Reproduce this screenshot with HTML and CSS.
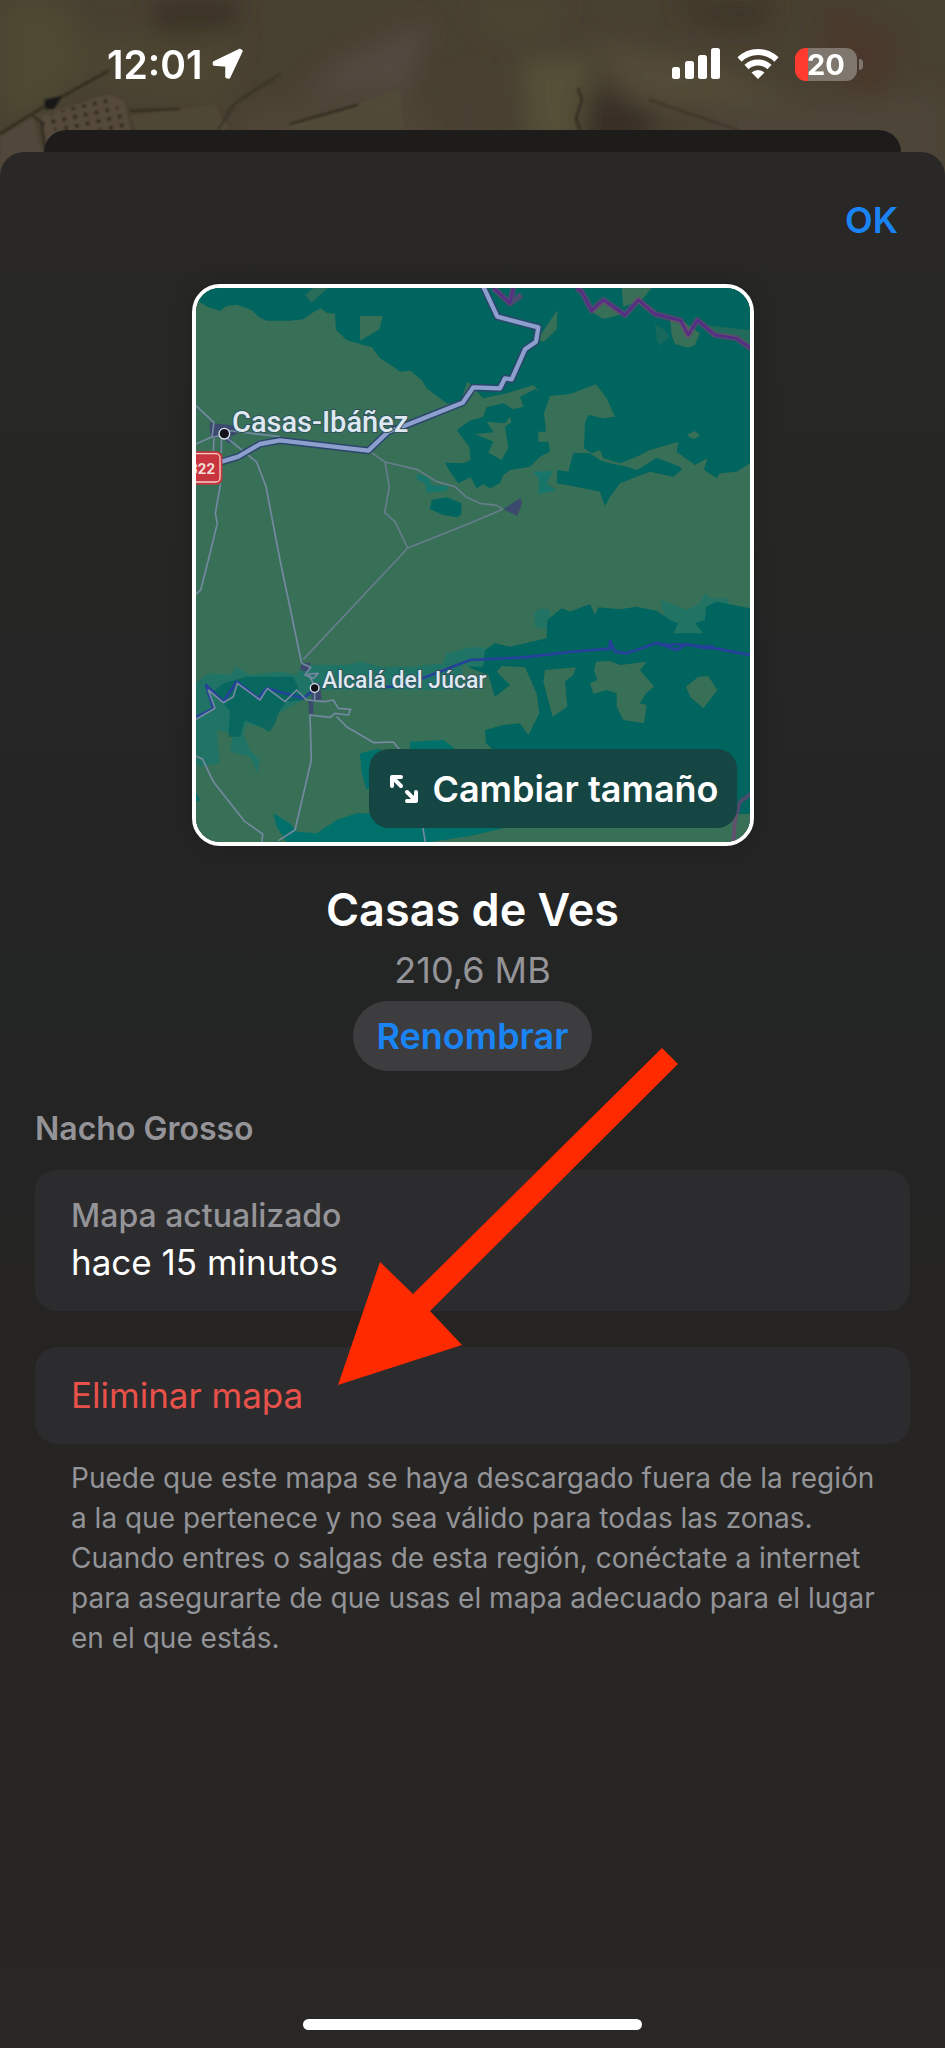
FILE: index.html
```html
<!DOCTYPE html>
<html lang="es">
<head>
<meta charset="UTF-8" />
<meta name="viewport" content="width=device-width, initial-scale=1" />
<title>Casas de Ves - Mapas sin conexión</title>
<link rel="stylesheet" href="styles.css">
</head>
<body>
<svg class="wallpaper" viewBox="0 0 945 180" preserveAspectRatio="none" aria-hidden="true">
  <defs>
    <filter id="soft" x="-20%" y="-20%" width="140%" height="140%"><feGaussianBlur stdDeviation="12" /></filter>
    <filter id="slight" x="-20%" y="-20%" width="140%" height="140%"><feGaussianBlur stdDeviation="1" /></filter>
    <pattern id="holes" width="11" height="9" patternUnits="userSpaceOnUse" patternTransform="rotate(-12)">
      <circle cx="5" cy="4" r="2" fill="#2a2119" />
    </pattern>
  </defs>
  <rect width="945" height="180" fill="#484031" />
  <g filter="url(#soft)">
    <path d="M0 0H60L100 60 40 110 0 120Z" fill="#4e4833" />
    <path d="M150 0H240L235 40 160 38Z" fill="#3b3325" />
    <path d="M60 40 240 30 225 110 110 90Z" fill="#4c4531" />
    <path d="M340 60 430 20 410 90 300 90Z" fill="#534a3f" />
    <path d="M250 110 400 90 470 180H210Z" fill="#4f4538" />
    <path d="M480 0H570L540 40 480 30Z" fill="#4c4530" />
    <path d="M520 60 590 55 580 150 530 150Z" fill="#545038" />
    <path d="M590 40 700 60 800 100 640 110Z" fill="#534b38" />
    <path d="M590 90 660 110 640 150 580 150Z" fill="#392e27" />
    <path d="M670 0H780L760 30 700 25Z" fill="#3e3427" />
    <path d="M820 0 900 40 880 110 830 70Z" fill="#49392a" />
    <path d="M700 110 945 90V180H740Z" fill="#4e4538" />
    <path d="M440 90 480 70 500 150H450Z" fill="#484033" />
  </g>
  <g filter="url(#slight)">
    <path d="M0 137 34 116 48 180H0Z" fill="#51463a" />
    <path d="M38 116 108 94 124 100 132 134 46 150Z" fill="#54493a" />
    <path d="M40 117 112 96 129 130H44Z" fill="url(#holes)" />
    <path d="M130 116 215 104 230 130H136Z" fill="#504634" />
    <path d="M290 122 358 104 400 88 404 130H292Z" fill="#524b36" opacity=".7" />
    <path d="M0 134 40 109 108 71" stroke="#28251c" stroke-width="2" fill="none" />
    <path d="M44 100 62 96 54 109 46 109Z" fill="#141917" />
    <path d="M32 116 41 121 46 150" stroke="#29251f" stroke-width="2" fill="none" />
    <path d="M130 111 180 109" stroke="#302a1e" stroke-width="2" />
    <path d="M218 130 234 104 280 74" stroke="#363025" stroke-width="2" fill="none" />
    <path d="M290 124 358 105" stroke="#2b251b" stroke-width="2" />
    <path d="M578 88 582 100 576 118 580 130" stroke="#2d281f" stroke-width="2" fill="none" />
    <path d="M650 100 738 130" stroke="#2f271f" stroke-width="1" />
  </g>
</svg>

<header class="status-bar">
  <div class="status-time">
    <span>12:01</span>
    <svg width="32" height="32" viewBox="0 0 32 32" aria-hidden="true">
      <path d="M28 2 2 14.500V16.500L14.500 17.500V29L17 29.500 29.500 3Z" fill="#fff" stroke="#fff" stroke-width="2.500" stroke-linejoin="round" />
    </svg>
  </div>
  <div class="status-icons">
    <svg width="49" height="32" viewBox="0 0 49 32" fill="#fff" aria-hidden="true">
      <rect x="0" y="19" width="8" height="12" rx="2.500" />
      <rect x="13" y="13" width="9" height="18" rx="2.500" />
      <rect x="26" y="7" width="9" height="24" rx="2.500" />
      <rect x="39" y="0" width="9" height="31" rx="2.500" />
    </svg>
    <svg width="42" height="32" viewBox="0 0 42 32" aria-hidden="true">
      <path d="M2.500 11.500A26.500 26.500 0 0 1 39.500 11.500" fill="none" stroke="#fff" stroke-width="6" />
      <path d="M9.500 19A17 17 0 0 1 32.500 19" fill="none" stroke="#fff" stroke-width="6" />
      <path d="M21 31 14.500 24.500A9.500 9.500 0 0 1 27.500 24.500Z" fill="#fff" />
    </svg>
    <div class="battery"><span class="battery-body">20</span><span class="battery-tip"></span></div>
  </div>
</header>

<div class="sheet-behind"></div>

<main class="sheet">
  <div class="toolbar">
    <button type="button" class="link-button">OK</button>
  </div>

  <section class="map-card" aria-label="Zona del mapa">
    <svg class="map" viewBox="0 0 554 554" role="img" aria-label="Mapa de Casas-Ibáñez y Alcalá del Júcar">
      <rect width="554" height="554" fill="#387057" />
      <g transform="translate(-16 -18) scale(.33333)">
        <!-- north forest -->
        <path fill="#00645f" d="M48 54V90L85 112 120 122 140 108 170 104 215 120 235 140 260 152 330 152 370 148 395 130 422 115 440 128 465 132 468 180 500 210 540 222 575 232 600 265 640 290 660 305 690 302 725 330 740 355 800 400 840 400 862 335 880 350 895 370 910 385 980 370 1060 345 1078 365 1065 358 1020 380 1030 410 1000 418 970 400 920 412 910 440 870 452 830 480 868 530 872 570 850 580 795 578 810 605 835 640 872 622 890 655 910 642 930 655 960 640 970 615 990 600 1050 590 1080 560 1110 545 1105 515 1075 515 1075 485 1098 485 1092 430 1110 378 1170 372 1248 343 1280 385 1305 440 1270 445 1225 435 1215 460 1212 535 1235 550 1260 540 1270 565 1320 580 1370 560 1410 540 1495 515 1490 545 1545 585 1582 565 1572 600 1610 625 1620 610 1670 605 1712 578V54Z" />
        <path fill="#00645f" d="M1180 548 1230 550 1260 570 1290 580 1340 590 1372 600 1430 563 1500 590 1505 600 1480 620 1410 605 1370 620 1320 640 1290 680 1275 708 1260 665 1210 655 1160 645 1130 640 1132 600 1165 605Z" />
        <path fill="#00645f" d="M755 690 800 682 845 700 843 735 830 742 790 735 750 718Z" />
        <path fill="#18756a" d="M710 612 745 622 755 645 805 648 800 664 740 668 735 640 712 630Z" />
        <path fill="#18756a" d="M1060 605 1120 603 1100 640 1130 662 1075 672 1078 630Z" />
        <g fill="#387057">
          <path d="M540 138 608 138 598 178 540 212Z" />
          <path d="M375 75 400 54H444L395 98Z" opacity=".7" />
          <path d="M1085 190 1132 120 1130 178 1092 215 1073 210Z" />
          <path d="M885 492 940 487 920 455 975 460 990 440 994 456 975 470 985 535 965 570 925 548 940 515Z" />
          <path d="M1235 125 1270 90 1330 128 1310 137 1270 147Z" />
          <path d="M1325 54H1415L1385 90 1430 125 1400 120 1370 95 1330 110Z" />
          <path d="M1470 150 1500 148 1560 190 1545 225 1525 233 1485 222 1475 195Z" />
          <path d="M1520 495 1545 483 1560 497 1540 508Z" />
          <path d="M1425 160 1450 178 1468 200 1440 228 1430 210Z" opacity=".4" />
          <path d="M1570 165 1630 172 1712 180V225L1640 195 1600 200Z" opacity=".6" />
        </g>

        <!-- valley forest -->
        <path fill="#18756a" d="M48 1240 85 1210 150 1215 170 1190 210 1215 300 1205 350 1215 365 1185 500 1185 545 1175 600 1190 700 1190 790 1180 800 1150 870 1132 915 1132V1260H858L848 1300 838 1260H430L350 1300 330 1310 230 1370 200 1360 190 1390 210 1440 240 1470 232 1510 210 1460 150 1445 160 1390 110 1380 120 1480 60 1490 48 1480Z" opacity=".75" />
        <path fill="#00645f" opacity=".75" d="M95 1270 130 1240 200 1220 340 1220 370 1290 320 1295 300 1320 285 1360 270 1385 195 1350 180 1400 145 1400 150 1320Z" />
        <path fill="#18756a" d="M1062 1030 1080 1015 1110 1020V1080L1065 1070ZM1440 990 1460 995 1520 1020 1560 1000 1575 970 1590 985 1645 985 1640 1080 1560 1110 1470 1100Z" opacity=".7" />
        <path fill="#00645f" d="M910 1190 915 1140 945 1120 990 1130 1100 1105 1102 1050 1145 1015 1170 1025 1230 1002 1245 1035 1255 1012 1320 1018 1370 1010 1430 1022 1470 1050 1495 1060 1480 1090 1570 1090 1545 1060 1575 1050 1578 1010 1610 995 1712 1015V1632H1600L870 1440V1190Z" />
        <path fill="#387057" d="M850 1170 860 1190 925 1215 945 1280 990 1245 950 1205 965 1188 1035 1192 1070 1270 1078 1330 1045 1395 1020 1360 970 1365 915 1380 918 1420 940 1440H850L840 1290Z" />
        <path fill="#387057" d="M1095 1200 1188 1192 1180 1215 1155 1235 1162 1310 1118 1340 1090 1235ZM1248 1175 1290 1172 1320 1185 1400 1175 1380 1200 1422 1250 1398 1270 1380 1300 1400 1305 1392 1360 1330 1350 1310 1310V1270L1280 1260 1240 1272 1230 1240 1252 1230 1242 1200ZM1518 1250 1555 1220 1585 1218 1612 1260 1570 1315 1530 1280Z" />
        <path fill="#00706a" d="M690 1415 790 1410 830 1440H690ZM540 1450 600 1435 620 1520 560 1560 545 1510ZM280 1630 330 1660 350 1685 410 1690 470 1650 530 1630 970 1632 970 1675 870 1698 750 1716H320L290 1670ZM48 1570 60 1590 48 1595Z" />

        <!-- rivers -->
        <g fill="none" stroke-linejoin="round">
          <path d="M940 54 990 100 1000 54M990 100 1025 75M1190 54 1205 65 1235 122 1270 90 1335 135 1375 90 1425 132 1502 152 1525 195 1552 150 1605 195 1670 205 1712 235" stroke="#7c3a78" stroke-width="18" opacity=".6" />
          <path d="M940 54 990 100 1000 54M1190 54 1205 65 1235 122 1270 90 1335 135 1375 90 1425 132 1502 152 1525 195 1552 150 1605 195 1670 205 1712 235" stroke="#572c87" stroke-width="7" />
          <path d="M48 1342 100 1315 78 1245 130 1295 170 1235 235 1285 260 1255 370 1285 400 1260M600 1252 660 1248 740 1220 870 1170 1030 1162 1180 1145 1290 1136 1290 1113 1305 1145 1340 1150 1385 1135 1430 1118 1490 1140 1520 1122 1560 1132 1610 1136 1640 1142 1712 1155" stroke="#26419a" stroke-width="8" />
          <path d="M1430 1120 1470 1125 1500 1122 1570 1130 1600 1128" stroke="#26419a" stroke-width="8" />
          <path d="M1712 1572 1680 1595 1665 1650 1660 1716" stroke="#7c3a78" stroke-width="12" opacity=".6" />
        </g>

        <!-- towns -->
        <path fill="#3b4a6d" d="M88 458 150 465 200 480 150 500 160 520 145 520 125 500 92 505ZM970 718 1022 683 1026 700 1012 738ZM365 1180 392 1178 385 1205 360 1200ZM385 1290H400V1332H387ZM392 1240 420 1240 425 1290H395Z" />

        <!-- local roads -->
        <g fill="none" stroke="#667d8c" stroke-width="5" stroke-linejoin="round">
          <path d="M48 407 102 458 96 500M48 522 90 503 130 495 230 576 258 650 300 870 365 1180M130 480 300 500M102 505 100 545M124 505V550M122 640 106 730 112 760 85 870 62 960 48 972" stroke="#7489a0" />
          <path d="M570 545 615 576 710 598 770 635 825 650 860 682 900 700 950 706 968 718 870 760 683 834 650 870 370 1168M615 576 628 650 614 728 645 755 683 834" />
          <path d="M48 1348 105 1315 85 1260 130 1298 160 1280 172 1240 240 1290 262 1255 315 1295 350 1260 380 1290 435 1295 460 1290 475 1315 512 1318 505 1335 465 1330 450 1342 390 1335 394 1470 345 1680 295 1712M470 1340 502 1372 582 1418 640 1416 660 1440M365 1180 392 1192 375 1215 400 1225 415 1210 385 1212 400 1240M404 1265V1290M48 1458 68 1468 100 1535 195 1655 248 1692 246 1716M728 1670 736 1716" stroke="#7489a0" />
        </g>

        <!-- N-322 -->
        <g fill="none" stroke-linejoin="round">
          <path d="M125 575 175 560 240 522 300 511 565 542 625 485 680 465 848 398 880 352 960 355 975 325 995 328 1035 238 1068 215 1075 172 952 140 910 50" stroke="#2b456b" stroke-width="22" />
          <path d="M125 575 175 560 240 522 300 511 565 542 625 485 680 465 848 398 880 352 960 355 975 325 995 328 1035 238 1068 215 1075 172 952 140 910 50" stroke="#8d9fcc" stroke-width="13" />
        </g>
        <rect x="0" y="544" width="127" height="100" rx="18" fill="#c8353f" />
        <rect x="0" y="551" width="120" height="85" rx="13" fill="none" stroke="#f0cfc8" stroke-width="4" />
        <circle cx="133" cy="491" r="16" fill="#15131c" stroke="#dbe6ee" stroke-width="4" />
        <circle cx="404" cy="1254" r="13" fill="#101018" stroke="#dbe6ee" stroke-width="4" />
      </g>
      <text class="road-number" x="19" y="186" text-anchor="end">322</text>
      <text class="town" x="36" y="144">Casas-Ibáñez</text>
      <text class="town town-small" x="126" y="400">Alcalá del Júcar</text>
    </svg>
    <button type="button" class="resize-button">
      <svg width="28" height="28" viewBox="0 0 28 28" fill="none" stroke="#fff" stroke-width="4" stroke-linecap="round" stroke-linejoin="round" aria-hidden="true">
        <path d="M2 11V2H11M3 3 11 11M26 17V26H17M25 25 17 17" />
      </svg>
      Cambiar tamaño
    </button>
  </section>

  <h1 class="map-name">Casas de Ves</h1>
  <p class="map-size">210,6 MB</p>
  <button type="button" class="rename-button">Renombrar</button>

  <section class="details">
    <h2 class="owner">Nacho Grosso</h2>
    <div class="card">
      <p class="card-label">Mapa actualizado</p>
      <p class="card-value">hace 15 minutos</p>
    </div>
    <button type="button" class="card delete-button">Eliminar mapa</button>
    <p class="footnote">Puede que este mapa se haya descargado fuera de la región a la que pertenece y no sea válido para todas las zonas. Cuando entres o salgas de esta región, conéctate a internet para asegurarte de que usas el mapa adecuado para el lugar en el que estás.</p>

    <svg class="pointer-arrow" width="340" height="337" viewBox="0 0 340 337" aria-hidden="true">
      <path d="M324 0 340 16 92 263 124 297 0 337 42 214 75 246Z" fill="#ff2a00" />
    </svg>
  </section>

  <div class="home-indicator"></div>
</main>
</body>
</html>
```
FILE: styles.css
```css
:root {
  --blue: #1a84f5;
  --red: #e8514a;
  --card: #2c2c2e;
  --grey: #949498;
  --font-family: Inter, "Liberation Sans", sans-serif;
}

* {
  box-sizing: border-box;
}

body {
  margin: 0;
  position: relative;
  min-height: 100vh;
  display: flex;
  flex-direction: column;
  font-family: var(--font-family);
  font-size: 36px;
  color: #fff;
  background: #282725;
}

h1,
h2,
p {
  margin: 0;
}

button {
  font: inherit;
  border: none;
  padding: 0;
  background: none;
  cursor: pointer;
}

.wallpaper {
  position: absolute;
  top: 0;
  left: 0;
  width: 100%;
  height: 180px;
}

.status-bar {
  position: relative;
  height: 130px;
  padding: 0 82px 2px 107px;
  display: flex;
  justify-content: space-between;
  align-items: center;
}

.status-time {
  display: flex;
  align-items: center;
  gap: 10px;
  font-size: 39px;
  font-weight: 600;
}

.status-icons {
  display: flex;
  align-items: center;
  gap: 16px;
}

.battery {
  display: flex;
  align-items: center;
  gap: 2px;
}

.battery-body {
  width: 62px;
  height: 33px;
  border-radius: 11px;
  background: linear-gradient(to right, #ff3b30 13px, #7f776e 13px);
  font-size: 29px;
  font-weight: 700;
  line-height: 33px;
  text-align: center;
}

.battery-tip {
  width: 4px;
  height: 11px;
  border-radius: 0 4px 4px 0;
  background: #7f776e;
}

.sheet-behind {
  position: relative;
  height: 22px;
  margin: 0 44px;
  border-radius: 22px 22px 0 0;
  background: #1d1c1b;
}

.sheet {
  position: relative;
  flex: 1;
  display: flex;
  flex-direction: column;
  align-items: center;
  padding: 46px 35px 18px;
  border-radius: 24px 24px 0 0;
  background: linear-gradient(#292826, #232424 45%, #252423 60%, #282725);
}

.toolbar {
  align-self: stretch;
  display: flex;
  justify-content: flex-end;
  padding-right: 12px;
}

.link-button {
  font-weight: 600;
  line-height: 44px;
  color: var(--blue);
}

.map-card {
  position: relative;
  width: 562px;
  max-width: 100%;
  margin-top: 42px;
  border: 4px solid #fff;
  border-radius: 28px;
  overflow: hidden;
  box-shadow: 0 0 24px rgb(0 0 0 / 0.2);
}

.map {
  display: block;
  width: 100%;
  height: auto;
}

.town {
  font-family: Roboto, var(--font-family);
  font-size: 29px;
  font-weight: 500;
  fill: #dde8f0;
  stroke: #33535c;
  stroke-width: 2px;
  paint-order: stroke;
}

.town-small {
  font-size: 23px;
}

.road-number {
  font-family: Roboto, var(--font-family);
  font-size: 15px;
  font-weight: 700;
  fill: #f5dcd6;
}

.resize-button {
  position: absolute;
  right: 13px;
  bottom: 14px;
  height: 79px;
  padding: 0 18px 0 21px;
  display: flex;
  align-items: center;
  gap: 14px;
  border-radius: 20px;
  background: #164643;
  color: #fff;
  font-weight: 600;
}

.map-name {
  margin-top: 36px;
  font-size: 45px;
  font-weight: 600;
  line-height: 56px;
}

.map-size {
  margin-top: 8px;
  line-height: 48px;
  color: var(--grey);
}

.rename-button {
  height: 70px;
  margin-top: 7px;
  padding: 0 23px;
  border-radius: 35px;
  background: #3d3d3f;
  color: var(--blue);
  font-weight: 600;
}

.details {
  position: relative;
  align-self: stretch;
  margin-top: 36px;
}

.owner {
  font-size: 32px;
  font-weight: 600;
  line-height: 44px;
  color: var(--grey);
}

.card {
  display: block;
  width: 100%;
  margin-top: 19px;
  padding: 24px 36px;
  border-radius: 22px;
  background: var(--card);
  text-align: left;
}

.card-label {
  font-size: 32px;
  font-weight: 500;
  line-height: 44px;
  color: var(--grey);
}

.card-value,
.delete-button {
  font-size: 35px;
  line-height: 49px;
}

.delete-button {
  margin-top: 36px;
  color: var(--red);
}

.footnote {
  margin-top: 14px;
  padding: 0 32px 0 36px;
  font-size: 28px;
  line-height: 40px;
  color: var(--grey);
}

/* runs from the rename button down to the delete row */
.pointer-arrow {
  position: absolute;
  top: -59px;
  left: 303px;
}

.home-indicator {
  width: 339px;
  height: 11px;
  margin-top: auto;
  border-radius: 6px;
  background: #fff;
}
```
